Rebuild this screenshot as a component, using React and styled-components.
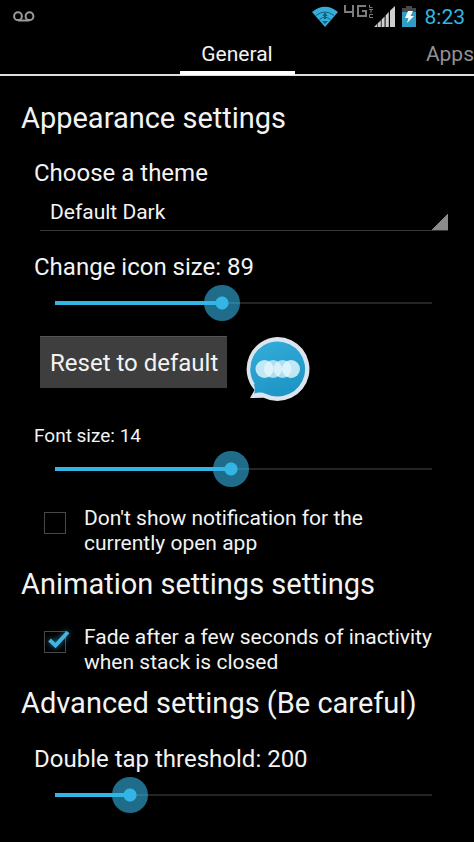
import React, { useState } from "react";
import styled, { createGlobalStyle } from "styled-components";

const accent = "#33b5e5";

const GlobalStyle = createGlobalStyle`
  * { box-sizing: border-box; }
  html { background: #000; }
  body {
    margin: 0;
    background: #000;
    color: #f3f3f3;
    font-family: Roboto, "Noto Sans", sans-serif;
    overflow-x: hidden;
  }
`;

const Screen = styled.div`
  min-height: 100vh;
  background: #000;
  overflow: hidden;
`;

const StatusBar = styled.header`
  display: flex;
  align-items: center;
  justify-content: space-between;
  height: 32px;
  padding: 1px 9px 0 13px;
`;

const StatusIcons = styled.div`
  display: flex;
  align-items: center;
`;

const Clock = styled.time`
  margin-left: 9px;
  font-size: 21px;
  line-height: 32px;
  color: ${accent};
`;

const Tabs = styled.nav`
  display: grid;
  grid-template-columns: 1fr 115px 1fr;
  height: 44px;
  border-bottom: 2px solid #dedede;
`;

const Tab = styled.button`
  grid-column: ${(p) => p.$column};
  justify-self: ${(p) => (p.$active ? "stretch" : "end")};
  height: 43px;
  padding: 5px 0 0;
  border: 0;
  border-bottom: 4px solid ${(p) => (p.$active ? "#fff" : "transparent")};
  background: none;
  color: ${(p) => (p.$active ? "#f3f3f3" : "#929292")};
  font: 21px/24px Roboto, "Noto Sans", sans-serif;
`;

const Content = styled.main`
  padding: 26px 24px 24px 21px;
`;

const Section = styled.section`
  margin-bottom: 12px;
`;

const Heading = styled.h2`
  margin: 0;
  font-size: 29px;
  line-height: 32px;
  font-weight: 400;
`;

const Field = styled.div`
  display: flex;
  flex-direction: column;
  padding-left: 13px;
  margin-top: ${(p) => p.$gap}px;
`;

const Label = styled.label`
  font-size: ${(p) => (p.$small ? 19 : 24)}px;
  line-height: ${(p) => (p.$small ? 22 : 28)}px;
`;

const Spinner = styled.select`
  appearance: none;
  height: 38px;
  margin: 6px 2px 0 6px;
  padding: 0 24px 0 10px;
  border: 0;
  border-bottom: 1px solid #3a3a3a;
  border-radius: 0;
  background: linear-gradient(135deg, transparent 50%, #8a8a8a 50%) right bottom / 16px 16px no-repeat;
  color: #f3f3f3;
  font: 21px/28px Roboto, "Noto Sans", sans-serif;
`;

const Slider = styled.input`
  appearance: none;
  height: 36px;
  margin: 4px 0 0 3px;
  border: 0;
  background:
    linear-gradient(${accent}, ${accent}) 18px center / calc((100% - 36px) * var(--fill)) 4px no-repeat,
    linear-gradient(#242424, #242424) 18px center / calc(100% - 36px) 2px no-repeat;

  &::-webkit-slider-thumb {
    appearance: none;
    width: 36px;
    height: 36px;
    border-radius: 50%;
    background: radial-gradient(circle, ${accent} 6px, rgba(51, 181, 229, 0.6) 7px);
  }
`;

const ResetRow = styled.div`
  display: flex;
  align-items: flex-start;
  gap: 18px;
  margin-top: 15px;
  padding-left: 19px;
`;

const ResetButton = styled.button`
  height: 52px;
  padding: 0 9px 0 10px;
  border: 0;
  border-top: 1px solid #555;
  background: #3e3e3e;
  color: #f3f3f3;
  font: 24px/28px Roboto, "Noto Sans", sans-serif;
`;

const CheckRow = styled.div`
  display: flex;
  align-items: flex-start;
  margin-top: ${(p) => p.$gap}px;
  padding-left: 23px;
`;

const CheckText = styled.label`
  flex: 1;
  max-width: 360px;
  font-size: 21px;
  line-height: 25px;
`;

const CheckHolder = styled.span`
  display: grid;
  flex: none;
  width: 40px;
  padding-top: 6px;

  > * { grid-area: 1 / 1; }
  svg { pointer-events: none; overflow: visible; }
`;

const CheckBox = styled.input`
  appearance: none;
  width: 22px;
  height: 22px;
  margin: 0;
  border: 1px solid #484848;
  background: #000;

  &:not(:checked) + svg { visibility: hidden; }
`;

const CheckMark = styled.svg`
  filter: drop-shadow(0 0 3px rgba(51, 181, 229, 0.7));
`;

function Seek({ id, label, min, max, initial, small, gap }) {
  const [value, setValue] = useState(initial);
  return (
    <Field $gap={gap}>
      <Label htmlFor={id} $small={small}>{label}: {value}</Label>
      <Slider
        id={id}
        type="range"
        min={min}
        max={max}
        value={value}
        onChange={(e) => setValue(Number(e.target.value))}
        style={{ "--fill": (value - min) / (max - min) }}
      />
    </Field>
  );
}

function Check({ id, initial, gap, children }) {
  return (
    <CheckRow $gap={gap}>
      <CheckHolder>
        <CheckBox id={id} type="checkbox" defaultChecked={initial} />
        <CheckMark width="26" height="22" viewBox="0 0 26 22" aria-hidden="true">
          <path d="M5.5 9l6 5.500L24 1" fill="none" stroke="#42b4df" strokeWidth="4" />
        </CheckMark>
      </CheckHolder>
      <CheckText htmlFor={id}>{children}</CheckText>
    </CheckRow>
  );
}

const VoicemailIcon = () => (
  <svg width="22" height="12" viewBox="0 0 22 12" fill="none" stroke="#9a9a9a" strokeWidth="2" aria-hidden="true">
    <circle cx="5" cy="5.2" r="3.9" />
    <circle cx="16.5" cy="5.2" r="3.9" />
    <path d="M5 9.5h11.5" />
  </svg>
);

const WifiIcon = () => (
  <svg width="28" height="22" viewBox="0 0 28 22" aria-hidden="true">
    <path d="M1 6Q14-4.500 27 6L14 21Z" fill="#35addb" />
    <g fill="none" stroke="#17607e" strokeWidth="1">
      <path d="M5 9.500Q14 2.500 23 9.500" />
      <path d="M8.500 13.500Q14 9 19.500 13.500" />
    </g>
    <path d="M14 6l2.500 4h-1.500v3h-2v-3h-1.500zM11 15h6l-3 3z" fill="#17607e" />
  </svg>
);

const NetworkIcon = () => (
  <svg width="30" height="14" viewBox="0 0 30 14" fill="none" stroke="#7d7d7d" strokeWidth="2" aria-hidden="true">
    <path d="M1 0v7h9M9 0v12" />
    <path d="M22 1h-8v10h8V6h-4" />
    <path d="M25.500 0v2.500h3M25 4.500h4M27 4.500v3.500M29 9.500H25.500v3h3.500" strokeWidth="1" />
  </svg>
);

const SignalIcon = () => (
  <svg width="21" height="22" viewBox="0 0 21 22" fill="#cfcfcf" aria-hidden="true">
    <path d="M0 21l3-3v3zM3.600 17.400l3.200-3.200V21H3.600zM7.600 13.400l3-3V21h-3zM11.600 9.400l3.200-3.500V21h-3.200zM16 4.800L21 0v21h-5z" />
  </svg>
);

const BatteryIcon = () => (
  <svg width="14" height="22" viewBox="0 0 14 22" aria-hidden="true">
    <path d="M4 0h6v2h4v5H0V2h4z" fill="#484848" />
    <path d="M0 6h14v15H0z" fill="#319dc5" />
    <path d="M6 5h5L8.500 10H12L5 17l1.500-5H3z" fill="#f5fbff" />
  </svg>
);

const NetworkHolder = styled.span`
  display: flex;
  align-self: flex-start;
  margin: 4px 0 0 5px;
`;

const SignalHolder = styled.span`
  display: flex;
  align-items: center;
  gap: 7px;
`;

const BubbleIcon = () => (
  <svg width="66" height="68" viewBox="0 0 66 68" role="img" aria-label="Chat bubble icon preview">
    <defs>
      <linearGradient id="bubble" x1="0" y1="0" x2="0.4" y2="1">
        <stop offset="0" stopColor="#35addb" />
        <stop offset="1" stopColor="#1f97c6" />
      </linearGradient>
    </defs>
    <path d="M32.500 1a32 32 0 1 1-14 60.800L5 62l4.500-8A32 32 0 0 1 32.500 1z" fill="#dce5ee" />
    <path d="M32.500 5.500a27.500 27.500 0 1 1-12 52.200q-5-2.500-11.500-.2 2-4.500-.5-9.500l1.500 .5A27.500 27.500 0 0 1 32.500 5.500z" fill="url(#bubble)" />
    <g fill="#e9faff">
      <circle cx="19.500" cy="33" r="9" fillOpacity="0.8" />
      <circle cx="46" cy="33" r="9" fillOpacity="0.8" />
      <circle cx="28" cy="33" r="9" fillOpacity="0.7" />
      <circle cx="37.500" cy="33" r="9" fillOpacity="0.7" />
    </g>
  </svg>
);

const PreviewHolder = styled.span`
  display: flex;
  height: 73px;
`;

export default function App() {
  return (
    <Screen>
      <GlobalStyle />
      <StatusBar>
        <VoicemailIcon />
        <StatusIcons>
          <WifiIcon />
          <NetworkHolder><NetworkIcon /></NetworkHolder>
          <SignalHolder><SignalIcon /><BatteryIcon /></SignalHolder>
          <Clock>8:23</Clock>
        </StatusIcons>
      </StatusBar>
      <Tabs>
        <Tab $column={2} $active>General</Tab>
        <Tab $column={3}>Apps</Tab>
      </Tabs>
      <Content>
        <Section>
          <Heading>Appearance settings</Heading>
          <Field $gap={25}>
            <Label htmlFor="theme">Choose a theme</Label>
            <Spinner id="theme">
              <option>Default Dark</option>
            </Spinner>
          </Field>
          <Seek id="icon-size" label="Change icon size" min={0} max={201} initial={89} gap={22} />
          <ResetRow>
            <ResetButton type="button">Reset to default</ResetButton>
            <PreviewHolder><BubbleIcon /></PreviewHolder>
          </ResetRow>
          <Seek id="font-size" label="Font size" min={0} max={30} initial={14} small gap={16} />
          <Check id="hide-open" gap={19}>
            Don't show notification for the currently open app
          </Check>
        </Section>
        <Section>
          <Heading>Animation settings settings</Heading>
          <Check id="fade" initial gap={25}>
            Fade after a few seconds of inactivity when stack is closed
          </Check>
        </Section>
        <Section>
          <Heading>Advanced settings (Be careful)</Heading>
          <Seek id="threshold" label="Double tap threshold" min={0} max={1010} initial={200} gap={26} />
        </Section>
      </Content>
    </Screen>
  );
}
